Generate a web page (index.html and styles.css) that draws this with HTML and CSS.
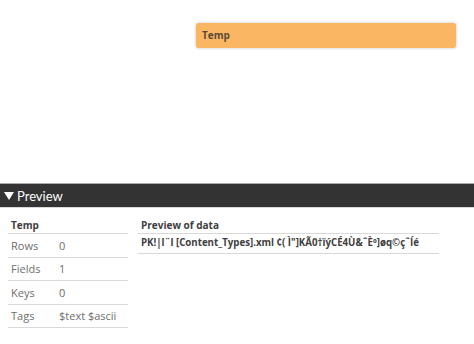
FILE: index.html
```html
<!DOCTYPE html>
<html>
<head>
<meta charset="utf-8">
<link rel="stylesheet" href="styles.css">
</head>
<body>
<div class="canvas">
  <div class="table-card">Temp</div>
</div>
<div class="preview-bar"><span class="tri"></span><span class="bar-title">Preview</span></div>
<div class="content">
  <div class="meta">
    <div class="meta-head">Temp</div>
    <div class="meta-row"><span class="k">Rows</span><span class="v">0</span></div>
    <div class="meta-row"><span class="k">Fields</span><span class="v">1</span></div>
    <div class="meta-row"><span class="k">Keys</span><span class="v">0</span></div>
    <div class="meta-row"><span class="k">Tags</span><span class="v">$text $ascii</span></div>
  </div>
  <div class="data">
    <div class="data-head">Preview of data</div>
    <div class="data-row">PK!|l¨l [Content_Types].xml ¢( Ì"]KÃ0†ïýCÉ4Ù&ˆÈº]øq©çˆÍé</div>
  </div>
</div>
</body>
</html>
```

FILE: styles.css
```css
* { box-sizing: border-box; }
html, body { margin: 0; padding: 0; background: #fff; }
body { width: 474px; height: 344px; overflow: hidden; font-family: "Open Sans", "Lato", sans-serif; }
.canvas { height: 183px; padding-top: 23px; padding-left: 196px; }
.table-card {
  width: 260px; height: 25px; background: #fbb663; border-radius: 3px;
  box-shadow: 0 0 3px rgba(0,0,0,0.25);
  font-size: 10px; font-weight: 700; color: #5a4a36; padding: 6px 0 0 6px; line-height: 12px;
}
.preview-bar {
  height: 25px; background: #333; border-top: 1px solid #aaa; border-bottom: 1px solid #d8d8d8;
  display: flex; align-items: center; padding-left: 4px; color: #fff;
}
.tri { width: 0; height: 0; border-left: 5px solid transparent; border-right: 5px solid transparent; border-top: 8px solid #fff; margin-right: 3px; margin-top: 1px; }
.bar-title { font-family: "Lato", sans-serif; font-size: 13px; }
.content { display: flex; padding: 10px 0 0 8px; gap: 10px; }
.meta { width: 120px; }
.meta-head { font-size: 10px; font-weight: 700; color: #404040; height: 16px; line-height: 14px; padding-left: 3px; border-bottom: 1px solid #d9d9d9; }
.meta-row { display: flex; height: 23.5px; align-items: center; border-bottom: 1px solid #d9d9d9; font-size: 11px; color: #6e6e6e; padding-left: 3px; }
.meta-row .k { width: 48px; }
.data { width: 301px; }
.data-head { font-size: 10px; font-weight: 700; color: #404040; height: 16px; line-height: 14px; padding-left: 3px; border-bottom: 1px solid #d9d9d9; }
.data-row { font-size: 9.7px; font-weight: 700; color: #404040; height: 20px; line-height: 17px; padding-left: 3px; border-bottom: 1px solid #d9d9d9; white-space: nowrap; overflow: hidden; }
```
